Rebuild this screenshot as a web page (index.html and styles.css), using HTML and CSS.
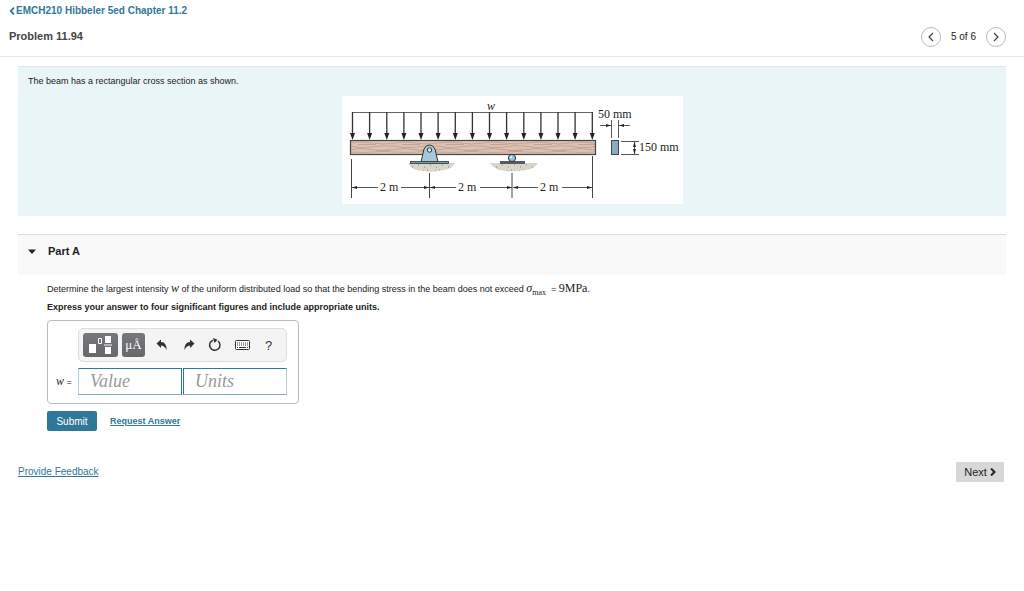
FILE: index.html
```html
<!DOCTYPE html>
<html lang="en">
<head>
  <meta charset="UTF-8">
  <meta name="viewport" content="width=device-width, initial-scale=1.0">
  <title>Problem 11.94</title>
  <link rel="stylesheet" href="styles.css">
</head>
<body>
  <header class="page-header">
    <a class="back-link" href="#">
      <svg width="6" height="8" viewBox="0 0 6 8"><path d="M5 0.7L1.7 4L5 7.3" fill="none" stroke="currentColor" stroke-width="1.8"/></svg>EMCH210 Hibbeler 5ed Chapter 11.2
    </a>
    <div class="title-row">
      <h1>Problem 11.94</h1>
      <nav class="pager">
        <button type="button" class="round-btn" aria-label="Previous">
          <svg width="6" height="10" viewBox="0 0 6 10"><path d="M5 1L1 5L5 9" fill="none" stroke="currentColor" stroke-width="1.2"/></svg>
        </button>
        <span>5 of 6</span>
        <button type="button" class="round-btn" aria-label="Next">
          <svg width="6" height="10" viewBox="0 0 6 10"><path d="M1 1L5 5L1 9" fill="none" stroke="currentColor" stroke-width="1.2"/></svg>
        </button>
      </nav>
    </div>
  </header>

  <main>
    <section class="intro">
      <p>The beam has a rectangular cross section as shown.</p>
      <svg class="figure" width="341" height="108" viewBox="0 0 341 108">
        <defs>
          <marker id="dim" markerUnits="userSpaceOnUse" markerWidth="5" markerHeight="4" refX="5" refY="2" orient="auto-start-reverse"><path d="M0 0.5L5 2L0 3.5z" fill="#222"/></marker>
          <pattern id="grain" width="44" height="14" patternUnits="userSpaceOnUse" x="8" y="44">
            <rect width="44" height="14" fill="#dcc2b2"/>
            <path d="M0 3q11-2 22 0t22 0M0 6q12 3 22 1t22-1M0 9.5q10-2 20 0t24 0M0 12q14 1 24 0t20 0M8 4.5h18M26 10.5h14" fill="none" stroke="#c09c8b" stroke-width="0.8"/>
          </pattern>
          <pattern id="soil" width="12" height="9" patternUnits="userSpaceOnUse">
            <rect width="12" height="9" fill="#dad5c9"/>
            <path d="M1 2h1M9 3h1M4 6h1M10 8h1" stroke="#8e8a80" stroke-width="1"/>
          </pattern>
        </defs>
        <rect width="341" height="108" fill="#fff"/>

        <!-- distributed load -->
        <path d="M10 16.5H251" stroke="#666"/>
        <path stroke="#333" stroke-width="1.3" d="M10.5 16V37M27.6 16V37M44.8 16V37M61.9 16V37M79 16V37M96.1 16V37M113.3 16V37M130.4 16V37M147.5 16V37M164.6 16V37M181.8 16V37M198.9 16V37M216 16V37M233.1 16V37M250.3 16V37"/>
        <path fill="#222" d="M8 37h5l-2.5 7zM25.1 37h5l-2.5 7zM42.3 37h5l-2.5 7zM59.4 37h5l-2.5 7zM76.5 37h5l-2.5 7zM93.6 37h5l-2.5 7zM110.8 37h5l-2.5 7zM127.9 37h5l-2.5 7zM145 37h5l-2.5 7zM162.1 37h5l-2.5 7zM179.3 37h5l-2.5 7zM196.4 37h5l-2.5 7zM213.5 37h5l-2.5 7zM230.6 37h5l-2.5 7zM247.8 37h5l-2.5 7z"/>

        <!-- beam -->
        <rect x="8.5" y="44.5" width="245" height="14" fill="url(#grain)" stroke="#444" stroke-width="1.2"/>

        <!-- pin support -->
        <path d="M66 67H113Q109 74 101 74Q90 77 82 75Q70 75 66 67z" fill="url(#soil)"/>
        <path d="M79 66L82 53Q84 49 87.5 49Q91 49 93 53L96 66z" fill="#a4c8dd" stroke="#333"/>
        <circle cx="87.5" cy="54" r="2.2" fill="#dcecf5" stroke="#333"/>
        <rect x="68.5" y="65.5" width="38" height="2" fill="#6f9bb3" stroke="#333" stroke-width="0.8"/>

        <!-- roller support -->
        <path d="M148 67H196Q192 73 184 74Q172 76 164 75Q152 74 148 67z" fill="url(#soil)"/>
        <rect x="158" y="65" width="25" height="3" fill="#555b60"/>
        <circle cx="170" cy="62" r="3.6" fill="#8cc4de" stroke="#333"/>
        <circle cx="169" cy="61" r="1.2" fill="#dff1f9"/>

        <!-- dimensions -->
        <path d="M9.5 63V102M87.5 77V102M170 77V102M250.5 60V102" stroke="#444"/>
        <g fill="none" stroke="#444" stroke-width="0.9">
          <path d="M36 91.5H10" marker-end="url(#dim)"/>
          <path d="M59 91.5H87" marker-end="url(#dim)"/>
          <path d="M114 91.5H88" marker-end="url(#dim)"/>
          <path d="M138 91.5H170" marker-end="url(#dim)"/>
          <path d="M196 91.5H171" marker-end="url(#dim)"/>
          <path d="M220 91.5H250" marker-end="url(#dim)"/>
          <path d="M258 29.5H269" marker-end="url(#dim)"/>
          <path d="M288 29.5H277" marker-end="url(#dim)"/>
          <path d="M292.5 46V58" marker-start="url(#dim)" marker-end="url(#dim)"/>
          <path d="M269.5 24V42M276.5 24V42M279 45.5H297M279 58.5H297"/>
        </g>
        <rect x="269.5" y="44.5" width="7" height="14" fill="#86abc2" stroke="#444"/>
        <g class="figure-text">
          <text x="145" y="14" font-style="italic">w</text>
          <text x="38" y="95">2 m</text>
          <text x="116" y="95">2 m</text>
          <text x="198" y="95">2 m</text>
          <text x="256" y="22">50 mm</text>
          <text x="297" y="55">150 mm</text>
        </g>
      </svg>
    </section>

    <section class="part">
      <h2 class="part-header">
        <svg width="8" height="5" viewBox="0 0 8 5"><path d="M0 0.5H8L4 5z" fill="currentColor"/></svg>
        Part A
      </h2>
      <form class="part-body">
        <p class="question">Determine the largest intensity <i class="math">w</i> of the uniform distributed load so that the bending stress in the beam does not exceed <i class="math">σ</i><sub>max</sub> &nbsp;= <span class="math">9MPa</span>.</p>
        <p class="instruction">Express your answer to four significant figures and include appropriate units.</p>

        <div class="answer-box">
          <div class="toolbar">
            <button type="button" class="tool-dark wide" aria-label="Templates">
              <svg width="23" height="18" viewBox="0 0 23 18"><path d="M0 8h7v9H0zM16 0h6v7h-6zM16 11h6v7h-6zM15 8.5h8v1h-8z" fill="#fff"/><path d="M9.5 2.5h3v5h-3z" fill="none" stroke="#fff"/></svg>
            </button>
            <button type="button" class="tool-dark" aria-label="Symbols">μÅ</button>
            <div class="tools">
              <button type="button" class="tool" aria-label="Undo">
                <svg width="12" height="12" viewBox="0 0 12 12"><path d="M0.5 4.5L5 0.5V3Q11 3.2 10.5 11.5Q9.3 6.8 5 6.5V9z" fill="currentColor"/></svg>
              </button>
              <button type="button" class="tool" aria-label="Redo">
                <svg width="12" height="12" viewBox="0 0 12 12"><path d="M11.5 4.5L7 0.5V3Q1 3.2 1.5 11.5Q2.7 6.8 7 6.5V9z" fill="currentColor"/></svg>
              </button>
              <button type="button" class="tool" aria-label="Reset">
                <svg width="14" height="14" viewBox="0 0 14 14"><path d="M10 3A5.2 5.2 0 1 1 5 2.2" fill="none" stroke="currentColor" stroke-width="1.5"/><path d="M5 0L9.5 1.8L6.5 5z" fill="currentColor"/></svg>
              </button>
              <button type="button" class="tool" aria-label="Keyboard">
                <svg width="15" height="10" viewBox="0 0 15 10"><rect x="0.5" y="0.5" width="14" height="9" rx="1" fill="#fff" stroke="currentColor"/><path d="M2 3h11M2 5h11" stroke="currentColor" stroke-dasharray="1 1"/><path d="M2 7.5h1M4 7.5h7M12 7.5h1" stroke="currentColor"/></svg>
              </button>
              <button type="button" class="tool help" aria-label="Help">?</button>
            </div>
          </div>
          <div class="fields">
            <label for="value"><i class="math">w</i> =</label>
            <input id="value" type="text" placeholder="Value">
            <input id="units" type="text" placeholder="Units" aria-label="Units">
          </div>
        </div>

        <div class="actions">
          <button type="submit" class="submit">Submit</button>
          <a class="request" href="#">Request Answer</a>
        </div>
      </form>
    </section>

    <footer class="page-footer">
      <a href="#">Provide Feedback</a>
      <button type="button" class="next">Next
        <svg width="6" height="8" viewBox="0 0 6 8"><path d="M1 0.5L4.5 4L1 7.5" fill="none" stroke="currentColor" stroke-width="2"/></svg>
      </button>
    </footer>
  </main>
</body>
</html>
```
FILE: styles.css
```css
* {
  box-sizing: border-box;
}

body {
  margin: 0;
  background: #fff;
  color: #222;
  font-family: "Liberation Sans", Arial, sans-serif;
  font-size: 9px;
  line-height: 12px;
}

h1, h2, p {
  margin: 0;
}

button {
  font-family: inherit;
  padding: 0;
  border: none;
  cursor: pointer;
}

a {
  color: #2f7899;
}

svg {
  display: block;
}

/* header */
.page-header {
  padding: 5px 18px 9px 9px;
  border-bottom: 1px solid #e6e6e6;
}

.back-link {
  display: flex;
  align-items: center;
  gap: 1px;
  font-size: 10px;
  font-weight: bold;
  text-decoration: none;
}

.title-row {
  display: flex;
  justify-content: space-between;
  align-items: flex-start;
  padding-top: 10px;
}

h1 {
  font-size: 11px;
  line-height: 18px;
  color: #444;
}

.pager {
  display: flex;
  align-items: center;
  gap: 10px;
  font-size: 10px;
}

.round-btn {
  display: flex;
  align-items: center;
  justify-content: center;
  width: 20px;
  height: 20px;
  border: 1px solid #bbb;
  border-radius: 50%;
  background: #fff;
  color: #444;
}

main {
  padding: 9px 18px;
}

/* problem statement */
.intro {
  padding: 8px 10px 12px;
  border-top: 1px solid #dfe9ea;
  background: #e9f5f7;
}

.figure {
  margin: 9px auto 0;
}

.figure-text {
  font-family: "Liberation Serif", "Times New Roman", serif;
  font-size: 12px;
  fill: #222;
}

/* part A */
.part {
  margin-top: 18px;
}

.part-header {
  display: flex;
  align-items: center;
  gap: 12px;
  padding: 10px 10px 17px;
  border-top: 1px solid #ddd;
  background: #f9f9f9;
  font-size: 11px;
  line-height: 13px;
}

.part-body {
  padding: 7px 29px 0;
}

.math,
.question sub {
  font-family: "Liberation Serif", "Times New Roman", serif;
  font-size: 12px;
}

.question sub {
  font-size: 8px;
  line-height: 0;
}

.instruction {
  margin-top: 6px;
  font-weight: bold;
}

.answer-box {
  width: 252px;
  margin-top: 7px;
  padding: 7px 11px 8px 8px;
  border: 1px solid #bbb;
  border-radius: 4px;
}

.toolbar {
  display: flex;
  align-items: center;
  gap: 4px;
  height: 34px;
  margin-left: 22px;
  padding: 0 4px;
  border: 1px solid #ddd;
  border-radius: 5px;
  background: #f4f4f4;
}

.tool-dark {
  display: flex;
  align-items: center;
  justify-content: center;
  width: 23px;
  height: 24px;
  border-radius: 3px;
  background: linear-gradient(#77787c, #66676b);
  color: #fff;
  font-family: "Liberation Serif", "Times New Roman", serif;
  font-size: 13px;
}

.wide {
  width: 35px;
}

.tools {
  display: flex;
  flex: 1;
  justify-content: space-around;
}

.tool {
  display: flex;
  align-items: center;
  justify-content: center;
  width: 23px;
  height: 24px;
  background: none;
  color: #333;
}

.help {
  font-size: 13px;
}

.fields {
  display: flex;
  align-items: center;
  gap: 1px;
  margin-top: 6px;
}

.fields label {
  width: 21px;
  white-space: nowrap;
}

.fields input {
  flex: 1;
  min-width: 0;
  height: 27px;
  padding: 0 11px;
  border: 1px solid #2f7899;
  border-bottom-color: #7faabf;
  border-radius: 0;
  font-family: "Liberation Serif", "Times New Roman", serif;
  font-size: 18px;
}

#value {
  border-left-color: #b5d0dc;
}

#units {
  border-right-color: #b5d0dc;
}

.fields input::placeholder {
  color: #999;
  font-style: italic;
}

.actions {
  display: flex;
  align-items: center;
  gap: 13px;
  margin-top: 7px;
}

.submit {
  width: 50px;
  height: 20px;
  border-radius: 2px;
  background: #2f7899;
  color: #fff;
  font-size: 10px;
}

.request {
  font-weight: bold;
}

/* footer */
.page-footer {
  display: flex;
  justify-content: space-between;
  align-items: center;
  margin-top: 31px;
  padding-right: 2px;
  font-size: 10px;
}

.next {
  display: flex;
  align-items: center;
  justify-content: center;
  gap: 3px;
  width: 48px;
  height: 20px;
  background: #d8d8d8;
  color: #222;
  font-size: 11px;
}
```
